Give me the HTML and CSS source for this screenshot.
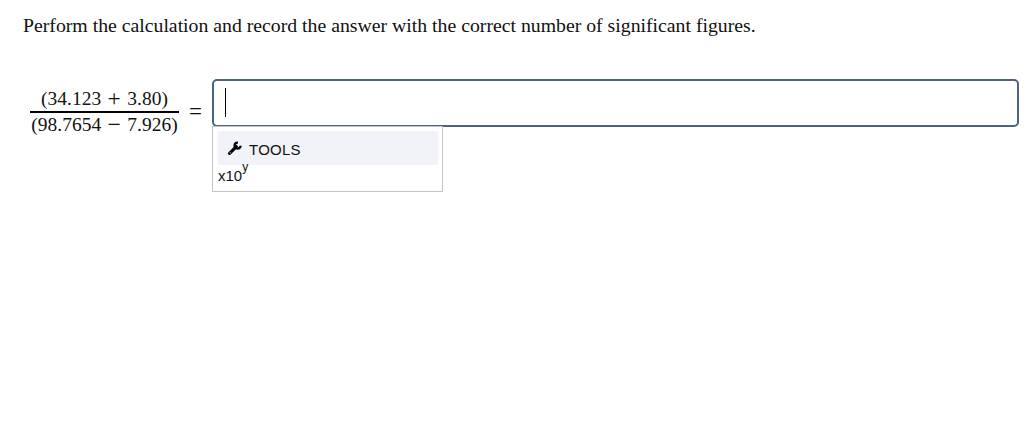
FILE: index.html
```html
<!DOCTYPE html>
<html lang="en">
<head>
  <meta charset="UTF-8" />
  <title>Significant Figures</title>
  <link rel="stylesheet" href="styles.css">
</head>
<body>
  <p class="prompt">Perform the calculation and record the answer with the correct number of significant figures.</p>
  <div class="problem">
    <div class="fraction"><div class="num">(34.123 <span class="op">+</span> 3.80)</div><div class="den">(98.7654 <span class="op">−</span> 7.926)</div></div>
    <span class="equals">=</span>
    <div class="answer">
      <div class="field"><span class="caret"></span></div>
      <div class="tools">
        <div class="tools-head">
          <svg class="wrench" viewBox="0 0 14 14"><path d="M1.600 12.400L8.300 5.700" stroke="#000" stroke-width="3.100" stroke-linecap="round"/><path d="M12.600 4.700A3 3 0 1 1 9.900 1.600" fill="none" stroke="#000" stroke-width="2.400"/><circle cx="2.200" cy="11.800" r=".6" fill="#fff"/></svg>
          <span>TOOLS</span>
        </div>
        <div class="tool">x10<sup>y</sup></div>
      </div>
    </div>
  </div>
</body>
</html>
```
FILE: styles.css
```css
*{margin:0;padding:0;box-sizing:border-box}
body{font-family:"Liberation Serif","Times New Roman",serif;background:#fff;color:#111}
.prompt{padding:13px 0 0 23px;font-size:19.75px;line-height:24px;white-space:nowrap}
.problem{display:flex;align-items:flex-start;margin-top:42px;padding-left:30px}
.fraction{width:149px;margin-top:8px;font-size:19.5px;text-align:center;white-space:nowrap}
.num{height:26px;line-height:23px;border-bottom:2px solid #000}
.den{line-height:23px}
.op{padding:0 1.5px;font-size:23.5px;line-height:0;vertical-align:-1px}
.equals{width:33px;padding-top:21px;font-size:23px;line-height:24px;text-align:center}
.answer{width:807px}
.field{height:48px;padding:7px 11px;border:2px solid #4d6480;border-radius:5px}
.caret{display:block;width:1px;height:29px;background:#000}
.tools{position:relative;width:231px;height:66px;margin-top:-1px;padding:4px 4px 0 5px;background:#fff;border:1px solid #c4c4c4;font-family:"Liberation Sans",Arial,sans-serif}
.tools-head{display:flex;align-items:center;height:34px;padding:2px 0 0 10px;background:#f2f3f8;font-size:15px;letter-spacing:.25px}
.wrench{width:14px;height:14px;margin:-2px 7px 0 0}
.tool{font-size:15px;line-height:21px}
.tool sup{position:relative;top:-4px;font-size:12px;line-height:0}
```
